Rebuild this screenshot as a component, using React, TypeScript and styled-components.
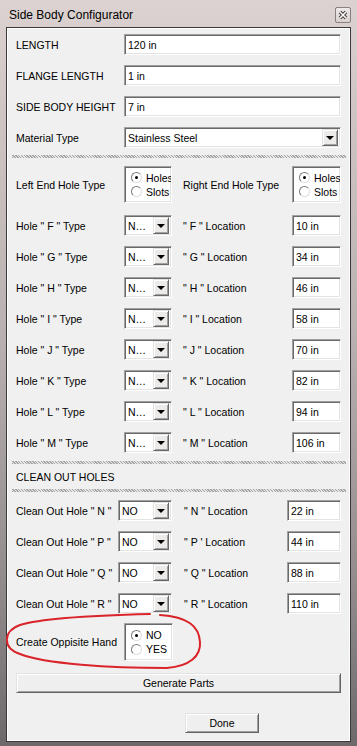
import React from "react";
import styled, { createGlobalStyle } from "styled-components";

const GlobalStyle = createGlobalStyle`
  html, body {
    margin: 0;
    padding: 0;
    background: #6e6a6b;
  }
  body {
    font-family: "Liberation Sans", Arial, sans-serif;
  }
`;

const Frame = styled.div`
  position: relative;
  width: 357px;
  height: 746px;
  box-sizing: border-box;
  padding: 0 6px 4px 6px;
  display: flex;
  flex-direction: column;
  background: linear-gradient(
    to bottom,
    #dcd2d1 0%,
    #cfc5c4 15%,
    #b9b1b1 45%,
    #8f898a 80%,
    #6d696a 100%
  );
`;

const TitleBar = styled.div`
  height: 27px;
  box-sizing: border-box;
  padding: 3px 0 0 3px;
  display: flex;
  align-items: center;
  justify-content: space-between;
  font-size: 12px;
  color: #000;
`;

const CloseBox = styled.div`
  width: 16px;
  height: 16px;
  box-sizing: border-box;
  border: 1px solid #8b8080;
  border-radius: 2px;
  background: linear-gradient(to bottom, #efe9e9, #d9d0d0);
  display: flex;
  align-items: center;
  justify-content: center;
`;

const Client = styled.div`
  flex: 1;
  border: 1px solid #3a3839;
  box-shadow: inset 1px 1px 0 #ffffff, inset -1px -1px 0 #ffffff;
  background: #f0f0f0;
  padding: 6px 9px 0 9px;
  display: flex;
  flex-direction: column;
  font-size: 10.5px;
  color: #000;
`;

const Rows = styled.div<{ $cols: string; $top?: number }>`
  display: grid;
  grid-template-columns: ${(p) => p.$cols};
  grid-auto-rows: 21px;
  row-gap: 10px;
  align-items: center;
  margin-top: ${(p) => p.$top ?? 0}px;
`;

const Label = styled.span<{ $indent?: number }>`
  padding-left: ${(p) => p.$indent ?? 0}px;
  white-space: nowrap;
`;

const TextBox = styled.input`
  height: 21px;
  width: 100%;
  box-sizing: border-box;
  margin: 0;
  padding: 0 3px;
  background: #fff;
  border: 1px solid;
  border-color: #a0a0a0 #ffffff #ffffff #a0a0a0;
  box-shadow: inset 1px 1px 0 #696969, inset -1px -1px 0 #e3e3e3;
  font-family: "Liberation Sans", Arial, sans-serif;
  font-size: 10.5px;
  color: #000;
  outline: none;
`;

const SelectBox = styled.div`
  height: 21px;
  box-sizing: border-box;
  background: #fff;
  border: 1px solid;
  border-color: #a0a0a0 #ffffff #ffffff #a0a0a0;
  box-shadow: inset 1px 1px 0 #696969, inset -1px -1px 0 #e3e3e3;
  display: flex;
  align-items: center;
  padding: 0 2px 0 3px;
  overflow: hidden;
`;

const SelectText = styled.span`
  flex: 1;
  white-space: nowrap;
  overflow: hidden;
`;

const DropButton = styled.div`
  width: 16px;
  height: 17px;
  box-sizing: border-box;
  flex: none;
  background: #ecebea;
  border: 1px solid;
  border-color: #e3e3e3 #696969 #696969 #e3e3e3;
  box-shadow: inset 1px 1px 0 #ffffff, inset -1px -1px 0 #a0a0a0;
  display: flex;
  align-items: center;
  justify-content: center;
`;

const Arrow = styled.span`
  width: 0;
  height: 0;
  border-left: 4px solid transparent;
  border-right: 4px solid transparent;
  border-top: 4px solid #000;
`;

const Separator = styled.div<{ $top: number }>`
  height: 3px;
  margin: ${(p) => p.$top}px -5px 0 -4px;
  background-image: repeating-linear-gradient(
    45deg,
    #a6a6a6 0 1px,
    #e6e6e6 1px 2px
  );
`;

const Heading = styled.div`
  height: 25px;
  display: flex;
  align-items: center;
`;

const RadioRow = styled.div<{ $cols: string; $top: number; $h: number }>`
  display: grid;
  grid-template-columns: ${(p) => p.$cols};
  height: ${(p) => p.$h}px;
  align-items: center;
  margin-top: ${(p) => p.$top}px;
`;

const RadioGroup = styled.div`
  height: 100%;
  box-sizing: border-box;
  background: #fff;
  border: 1px solid;
  border-color: #a0a0a0 #ffffff #ffffff #a0a0a0;
  box-shadow: inset 1px 1px 0 #696969, inset -1px -1px 0 #e3e3e3;
  padding: 0 2px 0 6px;
  display: flex;
  flex-direction: column;
  justify-content: center;
  overflow: hidden;
`;

const RadioItem = styled.div`
  height: 14px;
  display: flex;
  align-items: center;
  gap: 4px;
  white-space: nowrap;
`;

const RadioDot = styled.span<{ $on?: boolean }>`
  flex: none;
  position: relative;
  width: 11px;
  height: 11px;
  box-sizing: border-box;
  border-radius: 50%;
  background: #fff;
  border: 1px solid;
  border-color: #7a7a7a #dedede #dedede #7a7a7a;
  &::after {
    content: "";
    display: ${(p) => (p.$on ? "block" : "none")};
    position: absolute;
    left: 3px;
    top: 3px;
    width: 3px;
    height: 3px;
    border-radius: 50%;
    background: #000;
  }
`;

const Button = styled.div<{ $width?: number; $left?: number; $top: number }>`
  height: 20px;
  box-sizing: border-box;
  width: ${(p) => (p.$width ? `${p.$width}px` : "auto")};
  margin: ${(p) => p.$top}px 0 0 ${(p) => p.$left ?? 0}px;
  background: #efefef;
  border: 1px solid;
  border-color: #e3e3e3 #646464 #646464 #e3e3e3;
  box-shadow: inset 1px 1px 0 #ffffff, inset -1px -1px 0 #a0a0a0;
  display: flex;
  align-items: center;
  justify-content: center;
`;

const Scribble = styled.svg`
  position: absolute;
  left: 0;
  top: 0;
  pointer-events: none;
`;

const holes = [
  ["F", "10"],
  ["G", "34"],
  ["H", "46"],
  ["I", "58"],
  ["J", "70"],
  ["K", "82"],
  ["L", "94"],
  ["M", "106"],
];

const cleanOuts = [
  ["N", '" N " Location', "22"],
  ["P", "\" P ' Location", "44"],
  ["Q", '" Q " Location', "88"],
  ["R", '" R " Location', "110"],
];

const HOLE_COLS = "108px 48px 120px 49px";
const CLEAN_COLS = "102px 54px 115px 54px";

const Select: React.FC<{ value: string }> = ({ value }) => (
  <SelectBox>
    <SelectText>{value}</SelectText>
    <DropButton>
      <Arrow />
    </DropButton>
  </SelectBox>
);

const Radios: React.FC<{ options: string[] }> = ({ options }) => (
  <RadioGroup>
    {options.map((o, i) => (
      <RadioItem key={o}>
        <RadioDot $on={i === 0} />
        {o}
      </RadioItem>
    ))}
  </RadioGroup>
);

export default function App() {
  return (
    <>
      <GlobalStyle />
      <Frame>
        <TitleBar>
          <span>Side Body Configurator</span>
          <CloseBox>
            <svg width="10" height="10" viewBox="0 0 10 10">
              <path d="M2 2 L8 8 M8 2 L2 8" stroke="#3c3434" strokeWidth="3.4" />
              <path d="M2 2 L8 8 M8 2 L2 8" stroke="#ffffff" strokeWidth="1.6" />
            </svg>
          </CloseBox>
        </TitleBar>

        <Client>
          <Rows $cols="108px 1fr">
            <Label>LENGTH</Label>
            <TextBox defaultValue="120 in" />
            <Label>FLANGE LENGTH</Label>
            <TextBox defaultValue="1 in" />
            <Label>SIDE BODY HEIGHT</Label>
            <TextBox defaultValue="7 in" />
            <Label>Material Type</Label>
            <Select value="Stainless Steel" />
          </Rows>

          <Separator $top={7} />

          <RadioRow $cols={HOLE_COLS} $top={8} $h={37}>
            <Label>Left End Hole Type</Label>
            <Radios options={["Holes", "Slots"]} />
            <Label $indent={11}>Right End Hole Type</Label>
            <Radios options={["Holes", "Slots"]} />
          </RadioRow>

          <Rows $cols={HOLE_COLS} $top={12}>
            {holes.map(([k, loc]) => (
              <React.Fragment key={k}>
                <Label>{`Hole " ${k} " Type`}</Label>
                <Select value="N…" />
                <Label $indent={11}>{`" ${k} " Location`}</Label>
                <TextBox defaultValue={`${loc} in`} />
              </React.Fragment>
            ))}
          </Rows>

          <Separator $top={8} />
          <Heading>CLEAN OUT HOLES</Heading>
          <Separator $top={0} />

          <Rows $cols={CLEAN_COLS} $top={8}>
            {cleanOuts.map(([k, label, loc]) => (
              <React.Fragment key={k}>
                <Label>{`Clean Out Hole " ${k} "`}</Label>
                <Select value="NO" />
                <Label $indent={12}>{label}</Label>
                <TextBox defaultValue={`${loc} in`} />
              </React.Fragment>
            ))}
          </Rows>

          <RadioRow $cols="108px 49px" $top={9} $h={38}>
            <Label>Create Oppisite Hand</Label>
            <Radios options={["NO", "YES"]} />
          </RadioRow>

          <Button $top={12}>Generate Parts</Button>
          <Button $top={20} $left={169} $width={74}>
            Done
          </Button>
        </Client>

        <Scribble width="357" height="746" viewBox="0 0 357 746">
          <path
            d="M150 614 C110 615 45 617 20 625 C3 631 2 648 20 654 C45 664 110 668 167 668 C190 666 201 656 200 642 C199 626 188 617 160 615"
            fill="none"
            stroke="#d9242a"
            strokeWidth="2"
            strokeLinecap="round"
          />
        </Scribble>
      </Frame>
    </>
  );
}
